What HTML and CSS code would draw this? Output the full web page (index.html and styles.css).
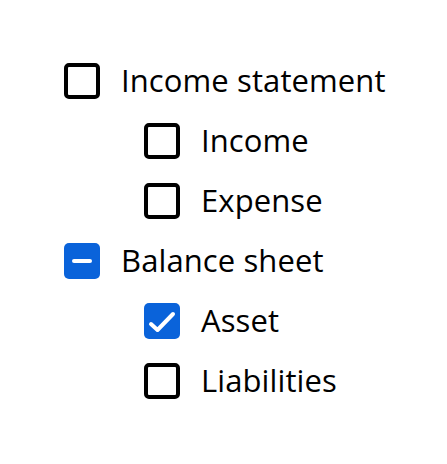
FILE: index.html
```html
<!DOCTYPE html>
<html>
<head>
<meta charset="utf-8">
<link rel="stylesheet" href="styles.css">
</head>
<body>
<div class="tree">
  <div class="row">
    <span class="box"></span><span class="label">Income statement</span>
  </div>
  <div class="row child">
    <span class="box"></span><span class="label">Income</span>
  </div>
  <div class="row child">
    <span class="box"></span><span class="label">Expense</span>
  </div>
  <div class="row">
    <span class="box on">
      <svg viewBox="0 0 36 36" width="36" height="36"><line x1="10" y1="18" x2="26" y2="18" stroke="#fff" stroke-width="4" stroke-linecap="round"/></svg>
    </span><span class="label">Balance sheet</span>
  </div>
  <div class="row child">
    <span class="box on">
      <svg viewBox="0 0 36 36" width="36" height="36"><polyline points="7,21 13.5,27 29,11" fill="none" stroke="#fff" stroke-width="4" stroke-linecap="round" stroke-linejoin="round"/></svg>
    </span><span class="label">Asset</span>
  </div>
  <div class="row child">
    <span class="box"></span><span class="label">Liabilities</span>
  </div>
</div>
</body>
</html>
```

FILE: styles.css
```css
html, body {
  margin: 0;
  padding: 0;
  background: #fff;
}
.tree {
  padding: 51px 0 0 64px;
  display: flex;
  flex-direction: column;
  font-family: "Open Sans", "DejaVu Sans", sans-serif;
  font-size: 31px;
  letter-spacing: 0.1px;
  color: #000;
}
.row {
  height: 60px;
  display: flex;
  align-items: center;
  gap: 21px;
}
.row.child {
  padding-left: 80px;
}
.box {
  box-sizing: border-box;
  width: 36px;
  height: 36px;
  border: 4px solid #000;
  border-radius: 5px;
  flex: none;
  position: relative;
}
.box.on {
  border: none;
  background: #0a63da;
}
.box svg {
  display: block;
}
.label {
  line-height: 1;
  position: relative;
  top: -1px;
}
```
